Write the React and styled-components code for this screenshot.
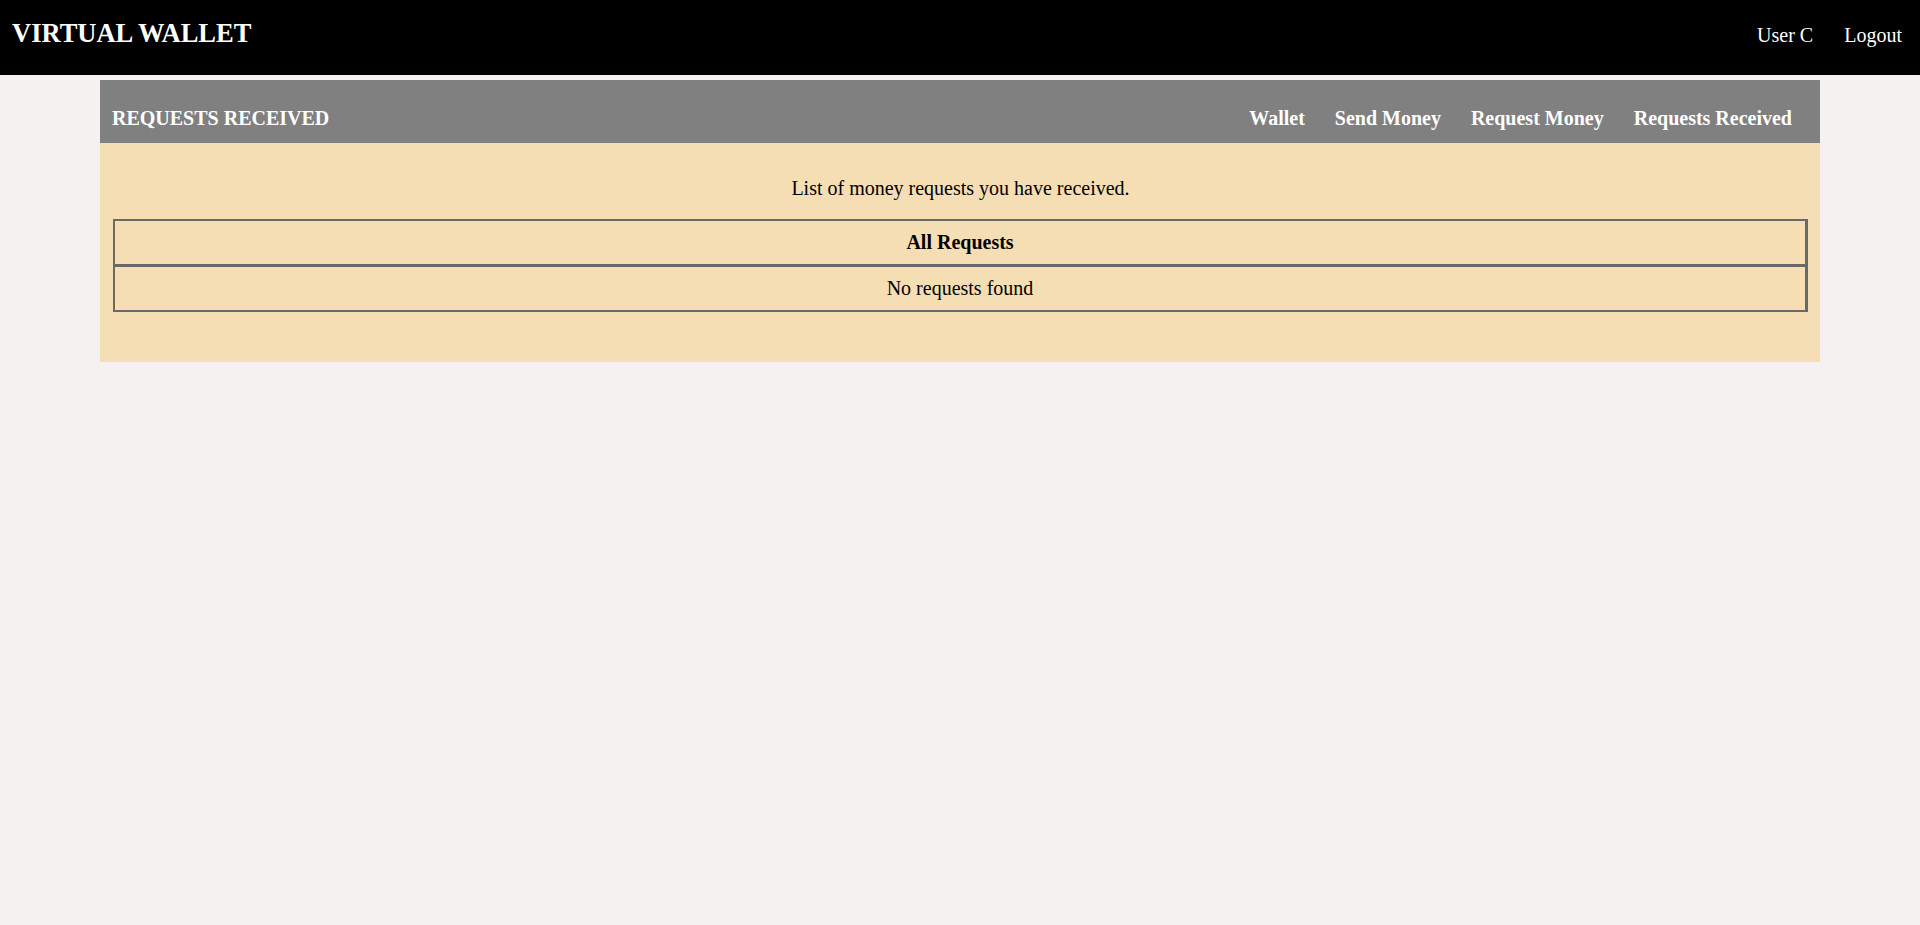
import React from "react";
import styled, { createGlobalStyle } from "styled-components";

const GlobalStyle = createGlobalStyle`
  html, body {
    margin: 0;
    padding: 0;
    background: #f4f1f0;
    font-family: "Liberation Serif", "Times New Roman", serif;
    font-size: 20px;
    color: #000;
  }
  * { box-sizing: border-box; }
`;

const TopBar = styled.header`
  height: 75px;
  background: #000;
  display: flex;
  align-items: baseline;
  justify-content: space-between;
  padding: 18px 18px 0 12px;
`;

const Brand = styled.h1`
  margin: 0;
  font-size: 26.5px;
  line-height: 30px;
  font-weight: bold;
  color: #fff;
`;

const UserNav = styled.nav`
  display: flex;
  align-items: baseline;
  gap: 31px;
`;

const UserLink = styled.a`
  color: #fff;
  font-size: 20px;
  line-height: 30px;
  text-decoration: none;
  cursor: pointer;
`;

const Main = styled.main`
  margin: 5px 100px 0;
`;

const SubBar = styled.div`
  background: #808080;
  display: flex;
  align-items: baseline;
  justify-content: space-between;
  padding: 27px 28px 13px 12px;
`;

const PageTitle = styled.h2`
  margin: 0;
  font-size: 20px;
  line-height: 23px;
  font-weight: bold;
  color: #fff;
`;

const SubNav = styled.nav`
  display: flex;
  align-items: baseline;
  gap: 30px;
`;

const SubLink = styled.a`
  color: #fff;
  font-weight: bold;
  font-size: 20px;
  line-height: 23px;
  text-decoration: none;
  cursor: pointer;
`;

const Panel = styled.section`
  background: #f5deb3;
  padding: 34px 12px 50px 13px;
`;

const Intro = styled.p`
  margin: 0 0 19px;
  text-align: center;
  line-height: 23px;
`;

const Table = styled.table`
  width: 100%;
  border-collapse: collapse;
  border: 2px solid #696969;
  border-right-width: 3px;
`;

const HeadCell = styled.th`
  padding: 10px;
  line-height: 23px;
  font-weight: bold;
  text-align: center;
  border-bottom: 3px solid #696969;
`;

const Cell = styled.td`
  padding: 10px;
  line-height: 23px;
  text-align: center;
`;

export default function App() {
  return (
    <>
      <GlobalStyle />
      <TopBar>
        <Brand>VIRTUAL WALLET</Brand>
        <UserNav>
          <UserLink>User C</UserLink>
          <UserLink>Logout</UserLink>
        </UserNav>
      </TopBar>
      <Main>
        <SubBar>
          <PageTitle>REQUESTS RECEIVED</PageTitle>
          <SubNav>
            <SubLink>Wallet</SubLink>
            <SubLink>Send Money</SubLink>
            <SubLink>Request Money</SubLink>
            <SubLink>Requests Received</SubLink>
          </SubNav>
        </SubBar>
        <Panel>
          <Intro>List of money requests you have received.</Intro>
          <Table>
            <thead>
              <tr>
                <HeadCell>All Requests</HeadCell>
              </tr>
            </thead>
            <tbody>
              <tr>
                <Cell>No requests found</Cell>
              </tr>
            </tbody>
          </Table>
        </Panel>
      </Main>
    </>
  );
}
